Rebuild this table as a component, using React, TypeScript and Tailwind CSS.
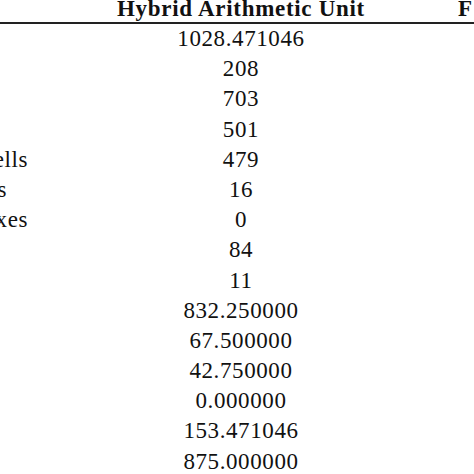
import React from "react";

type Row = { label: string; value: string; pad: string };

const rows: Row[] = [
  { label: "Total area", value: "1028.471046", pad: "pr-[60px]" },
  { label: "Number of ports", value: "208", pad: "pr-[60px]" },
  { label: "Number of nets", value: "703", pad: "pr-[60px]" },
  { label: "Number of cells", value: "501", pad: "pr-[60px]" },
  { label: "Number of combinational cells", value: "479", pad: "pr-0" },
  { label: "Number of sequential cells", value: "16", pad: "pr-[21px]" },
  { label: "Number of macros/black boxes", value: "0", pad: "pr-0" },
  { label: "Number of buf/inv", value: "84", pad: "pr-[60px]" },
  { label: "Number of references", value: "11", pad: "pr-[60px]" },
  { label: "Combinational area", value: "832.250000", pad: "pr-[60px]" },
  { label: "Buf/Inv area", value: "67.500000", pad: "pr-[60px]" },
  { label: "Noncombinational area", value: "42.750000", pad: "pr-[60px]" },
  { label: "Macro/Black Box area", value: "0.000000", pad: "pr-[60px]" },
  { label: "Net Interconnect area", value: "153.471046", pad: "pr-[60px]" },
  { label: "Total cell area", value: "875.000000", pad: "pr-[60px]" },
];

export default function App() {
  return (
    <div
      className="w-[474px] h-[474px] overflow-hidden bg-white text-[#111] text-[23px] tracking-[0.6px]"
      style={{ fontFamily: '"Liberation Serif", "Times New Roman", serif' }}
    >
      <div className="grid grid-cols-[28px_426px_18px] h-[22px] font-bold leading-[18px] tracking-[0.7px]">
        <div />
        <div className="text-center whitespace-nowrap">Hybrid Arithmetic Unit</div>
        <div className="pl-[4px] overflow-hidden whitespace-nowrap">Floating Point Unit</div>
      </div>
      <div className="h-[2px] w-full bg-[#222]" />
      {rows.map((r) => (
        <div
          key={r.label}
          className="grid grid-cols-[28px_426px_20px] h-[30.2px] leading-[30.2px]"
        >
          <div className={`flex justify-end overflow-hidden whitespace-nowrap ${r.pad}`}>
            <span className="shrink-0">{r.label}</span>
          </div>
          <div className="text-center whitespace-nowrap">{r.value}</div>
          <div />
        </div>
      ))}
    </div>
  );
}
